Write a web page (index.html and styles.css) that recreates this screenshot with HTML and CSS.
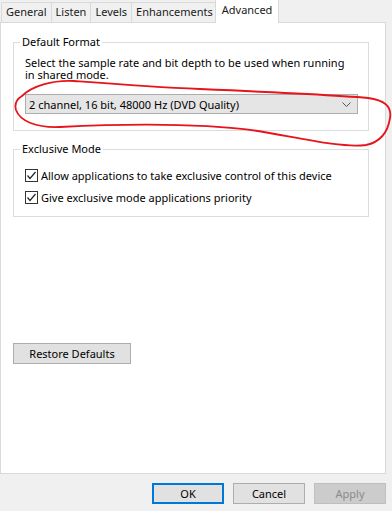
FILE: index.html
```html
<!DOCTYPE html>
<html>

<head>
    <meta name="viewport" content="width=device-width, initial-scale=1">
    <link rel="stylesheet" href="styles.css">
</head>

<body>
    <div id="dialog">
        <div class="tabs">
            <div class="tab">General</div>
            <div class="tab">Listen</div>
            <div class="tab">Levels</div>
            <div class="tab">Enhancements</div>
            <div class="tab active">Advanced</div>
        </div>

        <div id="page">
            <fieldset class="group">
                <legend>Default Format</legend>
                <p class="hint">Select the sample rate and bit depth to be used when running in shared mode.</p>
                <div class="combo">
                    <span>2 channel, 16 bit, 48000 Hz (DVD Quality)</span>
                    <svg class="chevron" width="9" height="5" viewBox="0 0 9 5">
                        <polyline points="0.5,0.5 4.5,4.5 8.5,0.5" fill="none" stroke="#555" stroke-width="1" />
                    </svg>
                </div>
            </fieldset>

            <fieldset class="group exclusive">
                <legend>Exclusive Mode</legend>
                <label class="check">
                    <span class="box">
                        <svg width="11" height="11" viewBox="0 0 11 11">
                            <polyline points="1.5,5.5 4,8.5 9.5,2" fill="none" stroke="#222" stroke-width="1.2" />
                        </svg>
                    </span>
                    Allow applications to take exclusive control of this device
                </label>
                <label class="check">
                    <span class="box">
                        <svg width="11" height="11" viewBox="0 0 11 11">
                            <polyline points="1.5,5.5 4,8.5 9.5,2" fill="none" stroke="#222" stroke-width="1.2" />
                        </svg>
                    </span>
                    Give exclusive mode applications priority
                </label>
            </fieldset>

            <button class="btn" id="restore">Restore Defaults</button>
        </div>

        <div class="actions">
            <button class="btn default">OK</button>
            <button class="btn">Cancel</button>
            <button class="btn" disabled>Apply</button>
        </div>
    </div>

    <!-- hand drawn annotation over the combo box -->
    <svg id="scribble" width="392" height="511" viewBox="0 0 392 511">
        <path d="M 22,96 C 32,86 52,80 74,81 C 100,83 150,87 200,89 C 270,92 335,95 368,98 C 384,100 392,106 390,118 C 388,131 381,142 366,145 C 340,148 300,138 258,131 C 200,123 120,124 60,127 C 36,128 20,121 16,110 C 14,103 17,99 22,96"
            fill="none" stroke="#e8141c" stroke-width="1.8" stroke-linecap="round" />
    </svg>
</body>

</html>
```
FILE: styles.css
```css
body {
    margin: 0;
    background-color: #f0f0f0;
    font-family: "Noto Sans", "Liberation Sans", Arial, sans-serif;
    font-size: 11px;
    color: #000;
}

#dialog {
    width: 392px;
    height: 511px;
    display: flex;
    flex-direction: column;
}

/* tab strip */
.tabs {
    display: flex;
    height: 22px;
    padding-left: 1px;
    align-items: flex-end;
}

.tab {
    height: 19px;
    line-height: 18px;
    padding: 0 4px;
    border: 1px solid #d9d9d9;
    border-bottom: none;
    margin-right: -1px;
    background-color: #f0f0f0;
    color: #1a1a1a;
}

.tab.active {
    line-height: 20px;
    padding: 0 6px;
    margin-left: -2px;
    background-color: #fff;
    position: relative;
    z-index: 1;
    margin-bottom: -1px;
    height: 23px;
}

/* the white page */
#page {
    height: 452px;
    width: 386px;
    background-color: #fff;
    border: 1px solid #d9d9d9;
    padding: 12px 16px 0 12px;
    box-sizing: border-box;
}

.group {
    margin: 0;
    border: 1px solid #dcdcdc;
    padding: 8px 10px 16px 11px;
}

.group legend {
    padding: 0 2px;
    margin-left: -5px;
    line-height: 14px;
}

.hint {
    margin: 0;
    line-height: 12px;
    padding-right: 8px;
}

.combo {
    margin-top: 13px;
    height: 20px;
    border: 1px solid #adadad;
    background-color: #e5e5e5;
    box-sizing: border-box;
    display: flex;
    align-items: center;
    justify-content: space-between;
    padding: 0 6px 0 3px;
}

.exclusive {
    margin-top: 11px;
    padding: 13px 10px 12px 11px;
}

.check {
    display: flex;
    align-items: center;
    height: 13px;
    gap: 3px;
}

.check + .check {
    margin-top: 9px;
}

.box {
    width: 13px;
    height: 13px;
    box-sizing: border-box;
    border: 1px solid #333;
    background-color: #fff;
    display: flex;
    align-items: center;
    justify-content: center;
}

/* buttons */
.btn {
    font-family: inherit;
    font-size: 11px;
    height: 21px;
    background-color: #e1e1e1;
    border: 1px solid #adadad;
    padding: 0;
    color: #000;
}

#restore {
    margin-top: 126px;
    width: 118px;
}

.actions {
    display: flex;
    justify-content: flex-end;
    gap: 9px;
    padding: 9px 6px 0 0;
}

.actions .btn {
    width: 72px;
}

.btn.default {
    border: 2px solid #0078d7;
}

.btn:disabled {
    background-color: #cccccc;
    border-color: #bfbfbf;
    color: #8a8a8a;
}

#scribble {
    position: absolute;
    top: 0;
    left: 0;
    pointer-events: none;
}
```
